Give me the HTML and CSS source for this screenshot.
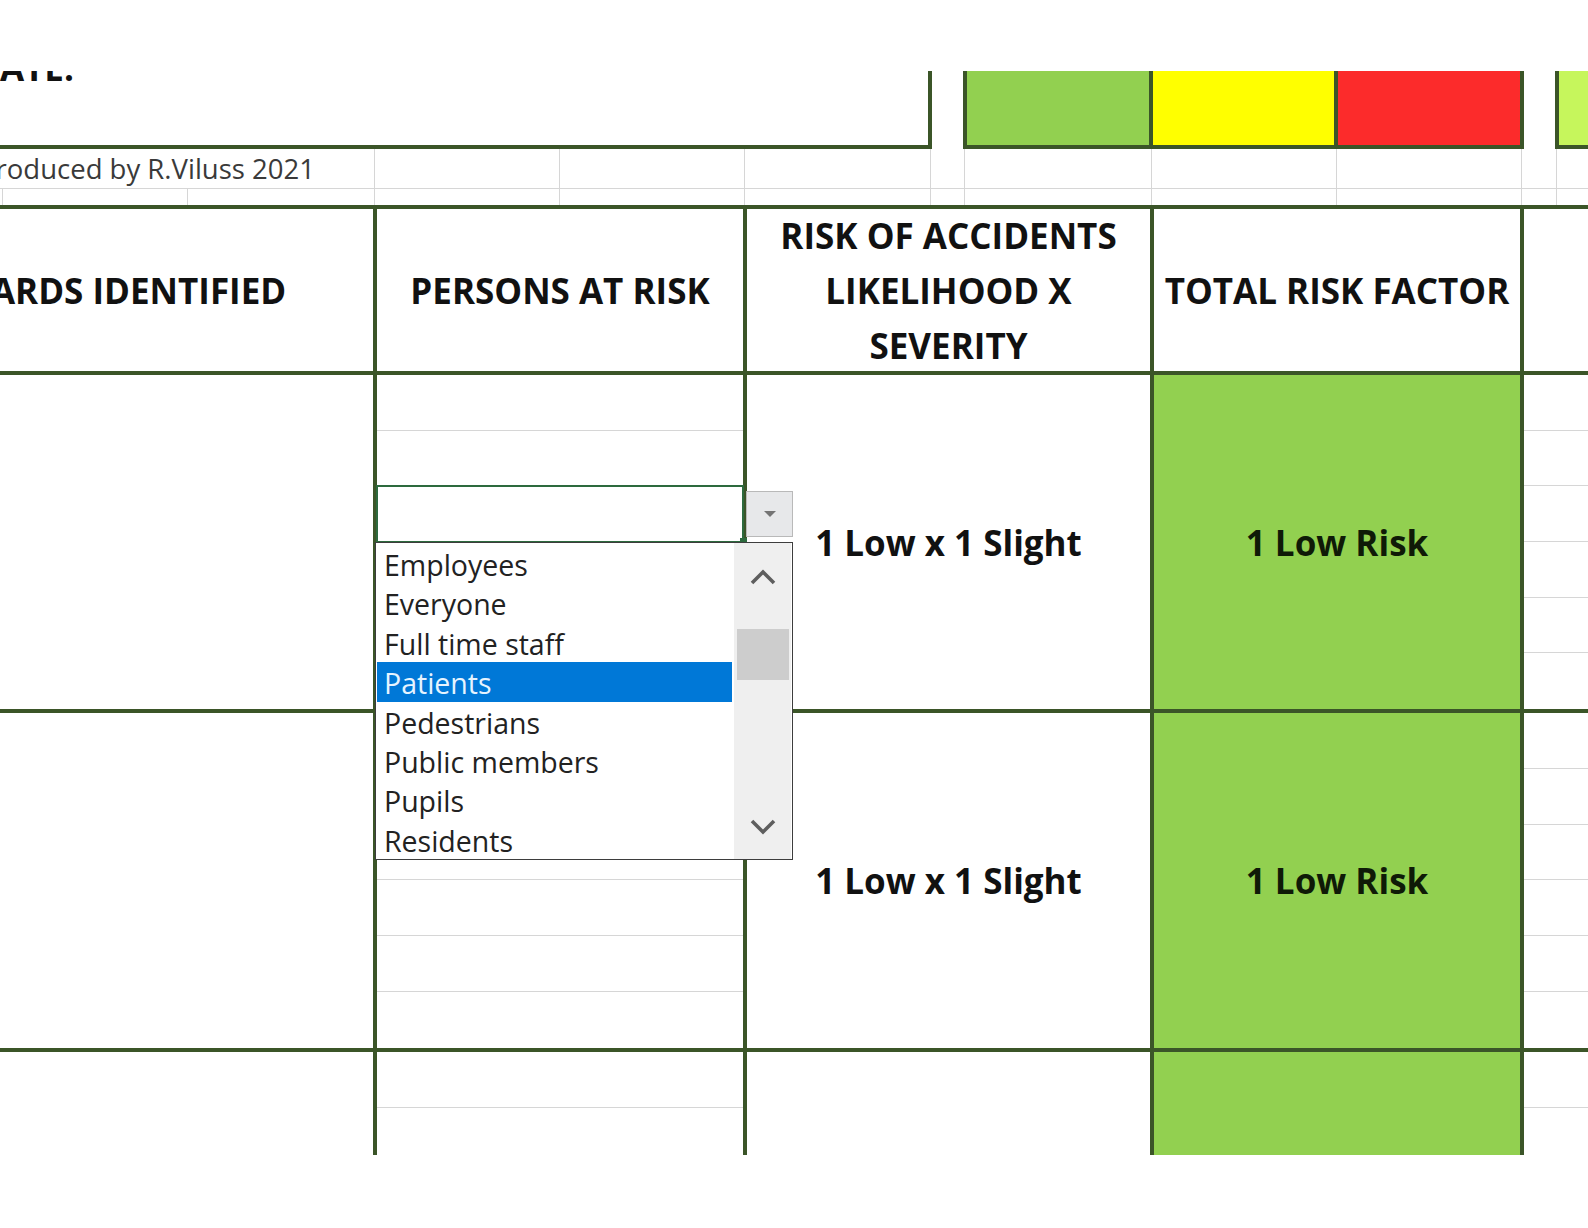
FILE: index.html
```html
<!DOCTYPE html>
<html lang="en">
<head>
    <meta charset="UTF-8">
    <meta name="viewport" content="width=device-width, initial-scale=1.0">
    <title>Risk Assessment</title>
    <link rel="stylesheet" href="styles.css">
</head>
<body>

    <div class="viewport">
        <div class="sheet">

            <!-- header block: date box, rating key, credit line -->
            <div class="top-grid">
                <div class="date-box"><span class="date-label">DATE:</span></div>
                <div class="rating-key">
                    <div class="swatch low"></div>
                    <div class="swatch medium"></div>
                    <div class="swatch high"></div>
                </div>
                <div class="swatch extra"></div>

                <div class="credit">Produced by R.Viluss 2021</div>
                <div class="gl under"></div>
                <div class="gl under"></div>
                <div class="gl under"></div>
                <div class="gl under"></div>
                <div class="gl under"></div>
                <div class="gl under"></div>
                <div class="gl under"></div>
                <div class="gl under"></div>
                <div class="gl under last"></div>

                <div class="gl"></div>
                <div class="gl"></div>
                <div class="gl"></div>
                <div class="gl"></div>
                <div class="gl"></div>
                <div class="gl"></div>
                <div class="gl"></div>
                <div class="gl"></div>
                <div class="gl"></div>
                <div class="gl"></div>
                <div class="gl"></div>
                <div class="gl last"></div>
            </div>

            <!-- assessment table -->
            <div class="risk-table">
                <div class="cell head">HAZARDS IDENTIFIED</div>
                <div class="cell head">PERSONS AT RISK</div>
                <div class="cell head">RISK OF ACCIDENTS<br>LIKELIHOOD X<br>SEVERITY</div>
                <div class="cell head">TOTAL RISK FACTOR</div>
                <div class="cell head end"></div>

                <!-- row 1 -->
                <div class="cell"></div>
                <div class="cell stack">
                    <div class="slot"></div>
                    <div class="slot"></div>
                    <div class="slot active">
                        <span class="fill-handle"></span>
                        <div class="drop-btn">
                            <svg width="14" height="8" viewBox="0 0 14 8"><polygon points="1,1 13,1 7,7" fill="#747474"/></svg>
                        </div>
                        <div class="drop-list">
                            <ul class="options">
                                <li>Employees</li>
                                <li>Everyone</li>
                                <li>Full time staff</li>
                                <li class="picked">Patients</li>
                                <li>Pedestrians</li>
                                <li>Public members</li>
                                <li>Pupils</li>
                                <li>Residents</li>
                            </ul>
                            <div class="scroller">
                                <div class="arrow up">
                                    <svg width="28" height="16" viewBox="0 0 28 16"><polyline points="3,14 14,3 25,14" fill="none" stroke="#5e5e5e" stroke-width="3.6"/></svg>
                                </div>
                                <div class="track"><div class="thumb"></div></div>
                                <div class="arrow down">
                                    <svg width="28" height="16" viewBox="0 0 28 16"><polyline points="3,2 14,13 25,2" fill="none" stroke="#5e5e5e" stroke-width="3.6"/></svg>
                                </div>
                            </div>
                        </div>
                    </div>
                    <div class="slot"></div>
                    <div class="slot"></div>
                    <div class="slot"></div>
                </div>
                <div class="cell value">1 Low x 1 Slight</div>
                <div class="cell value total">1 Low Risk</div>
                <div class="cell stack end">
                    <div class="slot"></div>
                    <div class="slot"></div>
                    <div class="slot"></div>
                    <div class="slot"></div>
                    <div class="slot"></div>
                    <div class="slot"></div>
                </div>

                <!-- row 2 -->
                <div class="cell"></div>
                <div class="cell stack">
                    <div class="slot"></div>
                    <div class="slot"></div>
                    <div class="slot"></div>
                    <div class="slot"></div>
                    <div class="slot"></div>
                    <div class="slot"></div>
                </div>
                <div class="cell value">1 Low x 1 Slight</div>
                <div class="cell value total">1 Low Risk</div>
                <div class="cell stack end">
                    <div class="slot"></div>
                    <div class="slot"></div>
                    <div class="slot"></div>
                    <div class="slot"></div>
                    <div class="slot"></div>
                    <div class="slot"></div>
                </div>

                <!-- row 3 -->
                <div class="cell"></div>
                <div class="cell stack fixed">
                    <div class="slot"></div>
                    <div class="slot"></div>
                </div>
                <div class="cell"></div>
                <div class="cell total"></div>
                <div class="cell stack fixed end">
                    <div class="slot"></div>
                    <div class="slot"></div>
                </div>
            </div>

        </div>
    </div>

</body>
</html>
```

FILE: styles.css
```css
* {
    box-sizing: border-box;
}

body {
    margin: 0;
    background-color: #fff;
    font-family: 'Open Sans', 'Noto Sans', sans-serif;
    color: #141414;
}

/* visible part of the worksheet */
.viewport {
    margin-top: 71px;
    height: 1084px;
    overflow: hidden;
}

.sheet {
    margin: -34px 0 0 -167px;
    width: 1755px;
}

/* ---------- top block ---------- */

.top-grid {
    display: grid;
    grid-template-columns: 170px 185px 187px 185px 185px 186px 34px 187px 185px 185px 35px 1fr;
    grid-template-rows: 112px 40px 16px;
}

.date-box {
    grid-column: 1 / 7;
    margin-right: -1px;
    border-right: 4px solid #3b5528;
    border-bottom: 4px solid #3b5528;
    padding: 6px 0 0 141px;
    overflow: hidden;
}

.date-label {
    font-size: 35px;
    font-weight: bold;
    line-height: 50px;
    color: #111;
}

.rating-key {
    grid-column: 8 / 11;
    margin: 0 -2px;
    padding: 0 4px 4px;
    background-color: #3b5528;
    display: grid;
    grid-template-columns: 1fr 1fr 1fr;
    gap: 4px;
}

.swatch.low {
    background-color: #92d050;
}

.swatch.medium {
    background-color: #ffff00;
}

.swatch.high {
    background-color: #fc2b2b;
}

.swatch.extra {
    grid-column: 12;
    margin-left: -2px;
    border-left: 4px solid #3b5528;
    border-bottom: 4px solid #3b5528;
    background-color: #c6f65c;
}

.credit {
    grid-column: 1 / 4;
    padding-left: 146px;
    font-size: 27.5px;
    line-height: 39px;
    color: #3a3a3a;
    white-space: nowrap;
    border-right: 1px solid #d6d6d6;
    border-bottom: 1px solid #d6d6d6;
}

.gl {
    border-right: 1px solid #d6d6d6;
}

.gl.under {
    border-bottom: 1px solid #d6d6d6;
}

.gl.last {
    border-right: none;
}

/* ---------- assessment table ---------- */

.risk-table {
    display: grid;
    grid-template-columns: 544px 370px 407px 370px 1fr;
    grid-template-rows: 166px 338px 339px 200px;
    border-top: 4px solid #3b5528;
}

.cell {
    border-right: 4px solid #3b5528;
    border-bottom: 4px solid #3b5528;
}

.cell.end {
    border-right: none;
}

.head {
    display: flex;
    align-items: center;
    justify-content: center;
    text-align: center;
    font-size: 35px;
    font-weight: bold;
    line-height: 55px;
    color: #111;
    white-space: nowrap;
}

.value {
    display: flex;
    align-items: center;
    justify-content: center;
    font-size: 35px;
    font-weight: bold;
    color: #111;
}

.total {
    background-color: #92d050;
    color: #0f1a07;
}

.stack {
    display: grid;
    grid-template-rows: repeat(6, 1fr);
}

.stack.fixed {
    grid-template-rows: 56px 56px;
}

.slot {
    border-bottom: 1px solid #d6d6d6;
}

.slot:last-child {
    border-bottom: none;
}

.stack.fixed .slot:last-child {
    border-bottom: 1px solid #d6d6d6;
}

/* selected cell with its validation list */
.slot.active {
    position: relative;
    outline: 2px solid #2d6a3e;
    outline-offset: -1px;
}

.fill-handle {
    position: absolute;
    right: -4px;
    bottom: -4px;
    width: 7px;
    height: 7px;
    background-color: #2d6a3e;
}

.drop-btn {
    position: absolute;
    left: calc(100% + 3px);
    top: 5px;
    width: 47px;
    height: 46px;
    background-color: #e7e8ea;
    border: 1px solid #b9b9b9;
    display: flex;
    align-items: center;
    justify-content: center;
    z-index: 2;
}

.drop-list {
    position: absolute;
    left: -2px;
    top: calc(100% + 1px);
    width: 418px;
    height: 318px;
    background-color: #fff;
    border: 1px solid #3d3d3d;
    display: flex;
    z-index: 3;
}

.options {
    flex: 1;
    margin: 0;
    padding: 1px 0 0;
    list-style: none;
}

.options li {
    height: 39.4px;
    margin: 0 2px 0 1px;
    padding: 2px 0 0 7px;
    font-size: 28.5px;
    line-height: 39px;
    color: #222;
}

.options li.picked {
    background-color: #0078d7;
    color: #e6f4ff;
}

.scroller {
    width: 57px;
    margin-right: 1px;
    background-color: #efefef;
    display: flex;
    flex-direction: column;
}

.arrow {
    display: flex;
    align-items: center;
    justify-content: center;
}

.arrow.up {
    height: 68px;
}

.arrow.down {
    height: 64px;
}

.track {
    flex: 1;
    padding: 18px 2px 0 3px;
}

.thumb {
    height: 51px;
    background-color: #cdcdcd;
}
```
